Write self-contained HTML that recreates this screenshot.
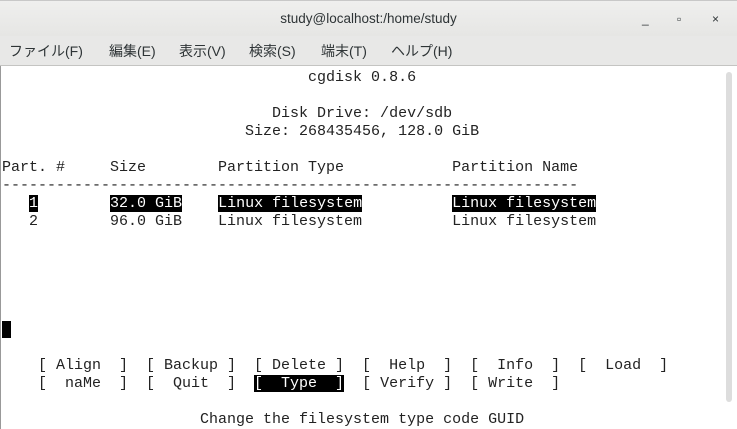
<!DOCTYPE html>
<html><head><meta charset="utf-8"><style>
body{margin:0;width:737px;height:429px;overflow:hidden;background:#fff;font-family:"Liberation Sans","Noto Sans CJK JP",sans-serif;position:relative}
#title{position:absolute;left:0;top:0;width:737px;height:36px;background:linear-gradient(#efefee,#e6e6e4);border-top:1px solid #c8c8c8;box-sizing:border-box;text-align:center;line-height:36px;font-size:13.5px;color:#2e3436}
#menu{position:absolute;left:0;top:36px;width:737px;height:30px;background:#e8e8e7;border-bottom:1px solid #c4c4c2;box-sizing:border-box;font-size:14px;color:#2e3436;line-height:30px}
#menu span{position:absolute;top:0}
.wb{position:absolute;top:0;font-size:12px;color:#2e3436}
#term{position:absolute;left:0;top:66px;width:737px;height:363px;background:#fff;border-left:1px solid #999;box-sizing:border-box}
pre{margin:0;position:absolute;left:1px;top:3px;font-family:"Liberation Mono","DejaVu Sans Mono",monospace;font-size:15px;line-height:18px;color:#222}
.h{background:#000;color:#fff}
#sb{position:absolute;right:5px;top:6px;width:6px;height:330px;background:#ddd;border-radius:3px}
</style></head><body>
<div id="title">study@localhost:/home/study
<span class="wb" style="left:642px">_</span><span class="wb" style="left:677px">▫</span><span class="wb" style="left:712px">×</span></div>
<div id="menu"><span style="left:9px">ファイル(F)</span><span style="left:109px">編集(E)</span><span style="left:179px">表示(V)</span><span style="left:249px">検索(S)</span><span style="left:321px">端末(T)</span><span style="left:391px">ヘルプ(H)</span></div>
<div id="term"><div id="sb"></div><pre>                                  cgdisk 0.8.6

                              Disk Drive: /dev/sdb
                           Size: 268435456, 128.0 GiB

Part. #     Size        Partition Type            Partition Name
----------------------------------------------------------------
   <span class="h">1</span>        <span class="h">32.0 GiB</span>    <span class="h">Linux filesystem</span>          <span class="h">Linux filesystem</span>
   2        96.0 GiB    Linux filesystem          Linux filesystem





<span class="h"> </span>

    [ Align  ]  [ Backup ]  [ Delete ]  [  Help  ]  [  Info  ]  [  Load  ]
    [  naMe  ]  [  Quit  ]  <span class="h">[  Type  ]</span>  [ Verify ]  [ Write  ]

                      Change the filesystem type code GUID</pre></div>
</body></html>
